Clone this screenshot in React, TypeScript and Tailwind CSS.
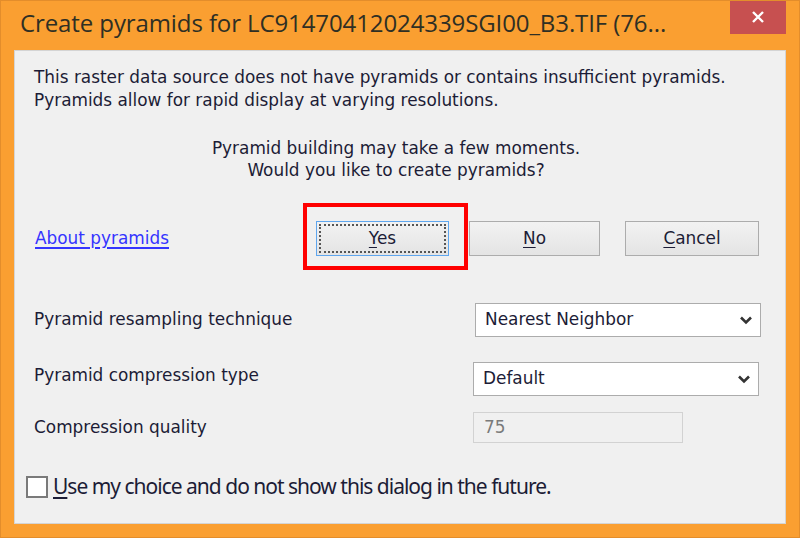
import React from "react";

const Chevron = () => (
  <svg width="14" height="10" viewBox="0 0 14 10" className="shrink-0 mr-[-2px]">
    <path d="M2 2.5 L7 7.5 L12 2.5" fill="none" stroke="#333" strokeWidth="2.6" />
  </svg>
);

export default function App() {
  const body = { fontFamily: '"DejaVu Sans", "Noto Sans", sans-serif' };
  return (
    <div className="w-[800px] h-[538px] bg-[#fa9f31] border border-[#e38d2b] flex flex-col px-[13px] pb-[13px] overflow-hidden">
      {/* Title bar */}
      <div className="h-[49px] flex items-start justify-between">
        <div
          className="pl-[6px] pt-[7px] text-[24px] leading-[30px] text-[#2f2f24] whitespace-nowrap tracking-[-0.1px]"
          style={{ fontFamily: '"Open Sans", "Noto Sans", sans-serif' }}
        >
          Create pyramids for LC91470412024339SGI00_B3.TIF (76...
        </div>
        <div className="w-[56px] h-[34px] bg-[#c75050] flex items-center justify-center mt-[-1px]">
          <svg width="16" height="16" viewBox="0 0 16 16">
            <path d="M3 3 L13 13 M13 3 L3 13" stroke="#fff" strokeWidth="2.4" />
          </svg>
        </div>
      </div>

      {/* Content */}
      <div
        className="flex-1 bg-[#f0f0f0] border border-[#d4d4d4] flex flex-col text-[16.9px] text-[#1c1c36]"
        style={body}
      >
        <div className="pl-[19px] pt-[15px] leading-[23px] whitespace-nowrap">
          <div>This raster data source does not have pyramids or contains insufficient pyramids.</div>
          <div>Pyramids allow for rapid display at varying resolutions.</div>
        </div>
        <div className="mt-[25px] leading-[22px] text-center pr-[8px]">
          <div>Pyramid building may take a few moments.</div>
          <div>Would you like to create pyramids?</div>
        </div>

        {/* Buttons row */}
        <div className="mt-[40px] h-[35px] flex items-center">
          <div className="ml-[20px] w-[281px]">
            <a className="text-[#3535ff] underline underline-offset-[3px] decoration-[1.5px]">
              About pyramids
            </a>
          </div>
          <div className="relative w-[133px] h-[35px]">
            <div className="absolute left-[-13px] top-[-18px] w-[165px] h-[67px] border-[4px] border-[#ff0000]" />
            <div className="w-full h-full border border-[#5fa6ee] bg-gradient-to-b from-[#f2f2f2] to-[#e4e4e4] p-[2px]">
              <div className="w-full h-full border-[2px] border-dotted border-[#555] flex items-center justify-center">
                <span>
                  <span className="underline underline-offset-[3px]">Y</span>es
                </span>
              </div>
            </div>
          </div>
          <div className="ml-[20px] w-[131px] h-[35px] border border-[#acacac] bg-gradient-to-b from-[#f2f2f2] to-[#e4e4e4] flex items-center justify-center">
            <span>
              <span className="underline underline-offset-[3px]">N</span>o
            </span>
          </div>
          <div className="ml-[25px] w-[134px] h-[35px] border border-[#acacac] bg-gradient-to-b from-[#f2f2f2] to-[#e4e4e4] flex items-center justify-center">
            <span>
              <span className="underline underline-offset-[3px]">C</span>ancel
            </span>
          </div>
        </div>

        {/* Resampling */}
        <div className="mt-[47px] h-[34px] flex items-center">
          <div className="ml-[19px] w-[441px]">Pyramid resampling technique</div>
          <div className="w-[286px] h-[34px] bg-white border border-[#acacac] flex items-center justify-between pl-[9px] pr-[9px]">
            <span>Nearest Neighbor</span>
            <Chevron />
          </div>
        </div>

        {/* Compression type */}
        <div className="mt-[25px] h-[34px] flex items-start">
          <div className="ml-[19px] w-[439px] mt-[1px]">Pyramid compression type</div>
          <div className="w-[286px] h-[34px] bg-white border border-[#acacac] flex items-center justify-between pl-[9px] pr-[9px]">
            <span>Default</span>
            <Chevron />
          </div>
        </div>

        {/* Compression quality */}
        <div className="mt-[16px] h-[31px] flex items-center">
          <div className="ml-[19px] w-[439px]">Compression quality</div>
          <div className="w-[210px] h-[31px] bg-[#f0f0f0] border border-[#d2d2d2] flex items-center pl-[10px] text-[#7a7a7a]">
            75
          </div>
        </div>

        {/* Checkbox */}
        <div className="mt-[28px] flex items-center">
          <div className="ml-[11px] w-[22px] h-[22px] bg-white border-[2px] border-[#7a7a7a]" />
          <div
            className="ml-[5px] text-[21px] tracking-[-1px] whitespace-nowrap"
            style={{ fontFamily: '"Noto Sans", sans-serif' }}
          >
            <span className="underline underline-offset-[3px]">U</span>se my choice and do not show this dialog in the future.
          </div>
        </div>
      </div>
    </div>
  );
}
